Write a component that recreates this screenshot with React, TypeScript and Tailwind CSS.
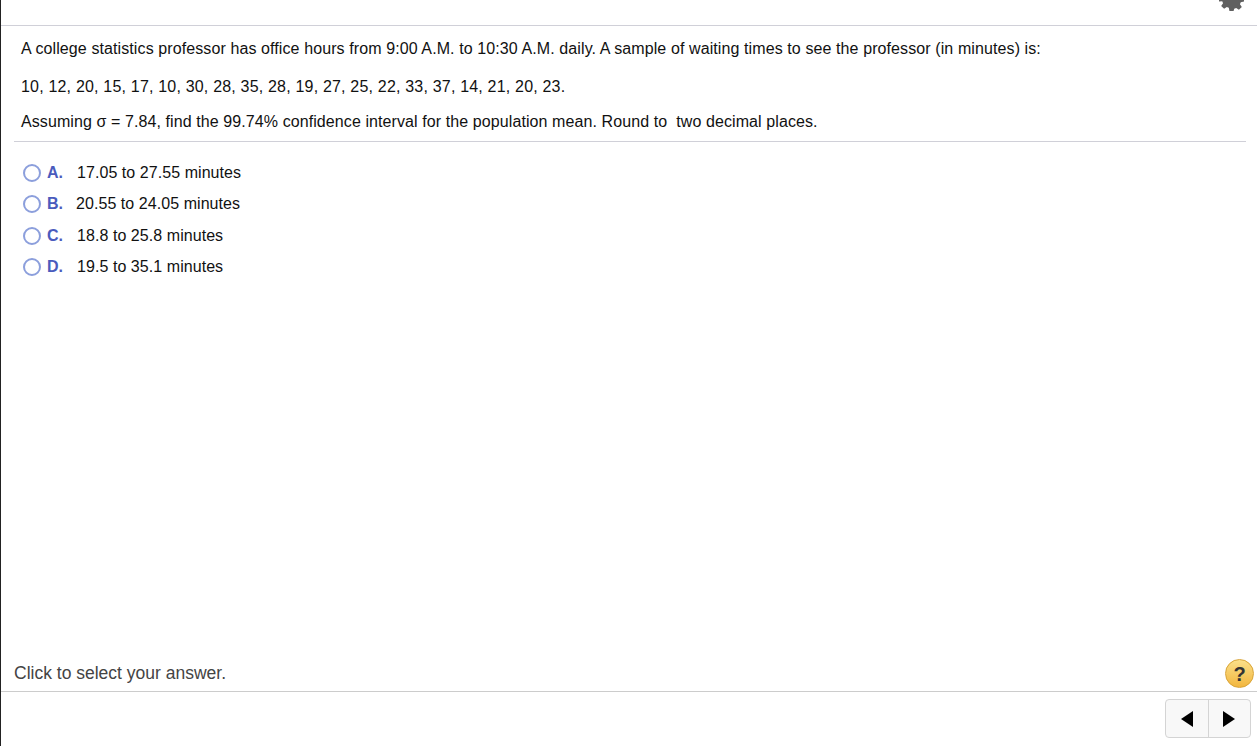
const options = [
  { id: "A", text: "17.05 to 27.55 minutes", gap: "ml-[14px]", row: "h-[31px]" },
  { id: "B", text: "20.55 to 24.05 minutes", gap: "ml-[13px]", row: "h-[32px]" },
  { id: "C", text: "18.8 to 25.8 minutes", gap: "ml-[14px]", row: "h-[31px]" },
  { id: "D", text: "19.5 to 35.1 minutes", gap: "ml-[14px]", row: "h-[31px]" },
];

function Gear() {
  return (
    <svg viewBox="0 0 24 24" className="absolute right-[13px] top-[-14px] h-[25px] w-[25px] text-[#606060]" fill="currentColor">
      <path d="M10 1h4l.6 3.1 1.9.8L19.1 3.100l2.800 2.800-1.800 2.600.8 1.900L24 11v4l-3.100.6-.8 1.900 1.800 2.600-2.800 2.800-2.600-1.800-1.900.8L14 24h-4l-.6-3.100-1.900-.8-2.600 1.800-2.800-2.800 1.800-2.600-.8-1.900L0 15v-4l3.100-.6.8-1.900-1.800-2.600 2.800-2.800 2.600 1.800 1.900-.8z" />
    </svg>
  );
}

export default function App() {
  return (
    <div className="relative flex h-[746px] w-full flex-col overflow-hidden border-l border-[#222222] bg-white font-['Liberation_Sans',Arial,sans-serif] text-[16px] text-[#111111]">
      <Gear />
      <div className="h-[26px] shrink-0 border-b border-[#d0d0d8]" />

      {/* Question */}
      <div className="ml-[13px] mr-[11px] border-b border-[#d0d0d8] px-[7px] pb-[9px] pt-[13px]">
        <p className="h-[20px] leading-[20px] tracking-[0.1px]">
          A college statistics professor has office hours from 9:00 A.M. to 10:30 A.M. daily. A sample of waiting times to see the professor (in minutes) is:
        </p>
        <p className="mt-[18px] h-[20px] leading-[20px] tracking-[0.19px]">
          10, 12, 20, 15, 17, 10, 30, 28, 35, 28, 19, 27, 25, 22, 33, 37, 14, 21, 20, 23.
        </p>
        <p className="mt-[15px] h-[20px] leading-[20px] tracking-[0.09px]">
          Assuming σ = 7.84, find the 99.74% confidence interval for the population mean. Round to&nbsp; two decimal places.
        </p>
      </div>

      {/* Answer choices */}
      <div className="ml-[22px] mt-[15px] flex flex-col">
        {options.map((o) => (
          <div key={o.id} className={`flex items-center ${o.row}`}>
            <span className="h-[18px] w-[18px] rounded-full border-[2.5px] border-[#8c9fdc]" />
            <span className="ml-[6px] w-[16px] font-bold text-[#4a5bbd]">{o.id}.</span>
            <span className={`${o.gap} tracking-[0.06px]`}>{o.text}</span>
          </div>
        ))}
      </div>

      {/* Footer */}
      <div className="mt-auto flex h-[36px] items-center justify-between border-b border-[#cccccc] pl-[13px] pr-[3px] text-[17.5px] text-[#444444]">
        <span>Click to select your answer.</span>
        <span className="flex h-[29px] w-[29px] items-center justify-center rounded-full border border-[#d9a437] bg-[linear-gradient(#fbe08a,#f2b63e)] text-[20px] font-bold text-[#333333]">
          ?
        </span>
      </div>
      <div className="flex h-[54px] shrink-0 justify-end pr-[6px] pt-[7px]">
        <div className="flex h-[39px] w-[86px] rounded-[4px] border border-[#d4d4d4] bg-[#f8f8f8]">
          <button className="flex flex-1 items-center justify-center border-r border-[#d4d4d4]">
            <svg viewBox="0 0 12 16" className="h-[16px] w-[12px]"><path d="M12 0v16L0 8z" fill="#000000" /></svg>
          </button>
          <button className="flex flex-1 items-center justify-center">
            <svg viewBox="0 0 12 16" className="h-[16px] w-[12px]"><path d="M0 0v16l12-8z" fill="#000000" /></svg>
          </button>
        </div>
      </div>
    </div>
  );
}
